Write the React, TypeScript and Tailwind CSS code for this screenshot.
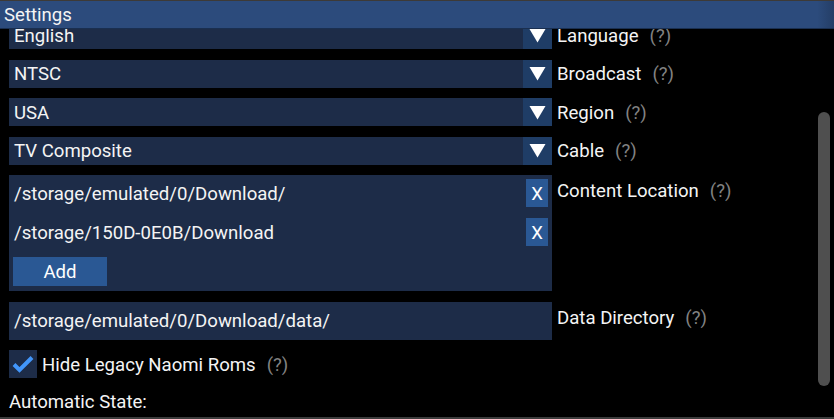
import React from "react"

const font = { fontFamily: "Roboto, 'Noto Sans', sans-serif" }

const Help = () => <span className="ml-[11px] pt-[2px] text-[#828282]">(?)</span>

const Arrow = () => (
  <div className="flex h-[28px] w-[29px] items-center justify-center bg-[#1f3d66]">
    <svg width="17" height="15" viewBox="0 0 17 15">
      <polygon points="0.5,1 16.5,1 8.5,14.5" fill="#ffffff" />
    </svg>
  </div>
)

interface ComboProps {
  value: string
  label: string
}

const Combo = ({ value, label }: ComboProps) => (
  <div className="flex h-[28px] items-center">
    <div className="flex h-full w-[543px] items-center bg-[#1d2c48]">
      <span className="flex-1 pl-[5px] pt-[2px]">{value}</span>
      <Arrow />
    </div>
    <span className="ml-[5px] pt-[2px]">{label}</span>
    <Help />
  </div>
)

const XButton = () => (
  <button className="flex h-[28px] w-[22px] items-center justify-center bg-[#2a5894] pt-[2px] text-white">
    X
  </button>
)

const paths = ["/storage/emulated/0/Download/", "/storage/150D-0E0B/Download"]

const App = () => {
  return (
    <div
      className="flex h-[419px] w-[834px] flex-col overflow-hidden border-b-2 border-[#3c3c3c] bg-black text-[18.6px] leading-none text-[#f4f4f4] antialiased"
      style={font}
    >
      <div className="relative z-10 flex h-[29px] shrink-0 items-center border-t border-b border-t-[#3d3a37] border-b-[#1a2f50] bg-gradient-to-r from-[#2c4b7c] from-98% to-[#243e66] pl-[4px] pt-[1px]">
        Settings
      </div>

      <div className="flex flex-1">
        <div className="flex flex-1 flex-col gap-[10.5px] pl-[9px] mt-[-8px]">
          <Combo value="English" label="Language" />
          <Combo value="NTSC" label="Broadcast" />
          <Combo value="USA" label="Region" />
          <Combo value="TV Composite" label="Cable" />

          <div className="flex items-start">
            <div className="flex h-[116px] w-[543px] flex-col gap-[11px] bg-[#1d2c48] p-[4px]">
              {paths.map((p) => (
                <div key={p} className="flex h-[28px] items-center">
                  <span className="flex-1 pl-[1px] pt-[2px]">{p}</span>
                  <XButton />
                </div>
              ))}
              <button className="h-[29px] w-[94px] bg-[#2a5894] pt-[2px] text-white">Add</button>
            </div>
            <div className="ml-[5px] flex h-[31px] items-center">
              <span className="pt-[2px]">Content Location</span>
              <Help />
            </div>
          </div>

          <div className="flex h-[38px] items-center">
            <div className="flex h-full w-[543px] items-center bg-[#1d2c48] pl-[5px] pt-[2px]">
              /storage/emulated/0/Download/data/
            </div>
            <div className="ml-[5px] mb-[7px] flex items-center">
              <span className="pt-[2px]">Data Directory</span>
              <Help />
            </div>
          </div>

          <div className="flex h-[28px] items-center">
            <div className="flex h-[28px] w-[28px] items-center justify-center bg-[#1d2c48]">
              <svg width="22" height="18" viewBox="0 0 22 18">
                <polyline
                  points="2,9.5 7.5,15 20,2.5"
                  fill="none"
                  stroke="#4296fa"
                  strokeWidth="4"
                  strokeLinecap="butt"
                />
              </svg>
            </div>
            <span className="ml-[5px] pt-[2px]">Hide Legacy Naomi Roms</span>
            <Help />
          </div>

          <div className="pt-[4px]">Automatic State:</div>
        </div>

        <div className="mr-[4px] w-[12px] shrink-0 pt-[83px]">
          <div className="h-[274px] w-full rounded-full bg-[#4f4f4f]" />
        </div>
      </div>
    </div>
  )
}

export default App
